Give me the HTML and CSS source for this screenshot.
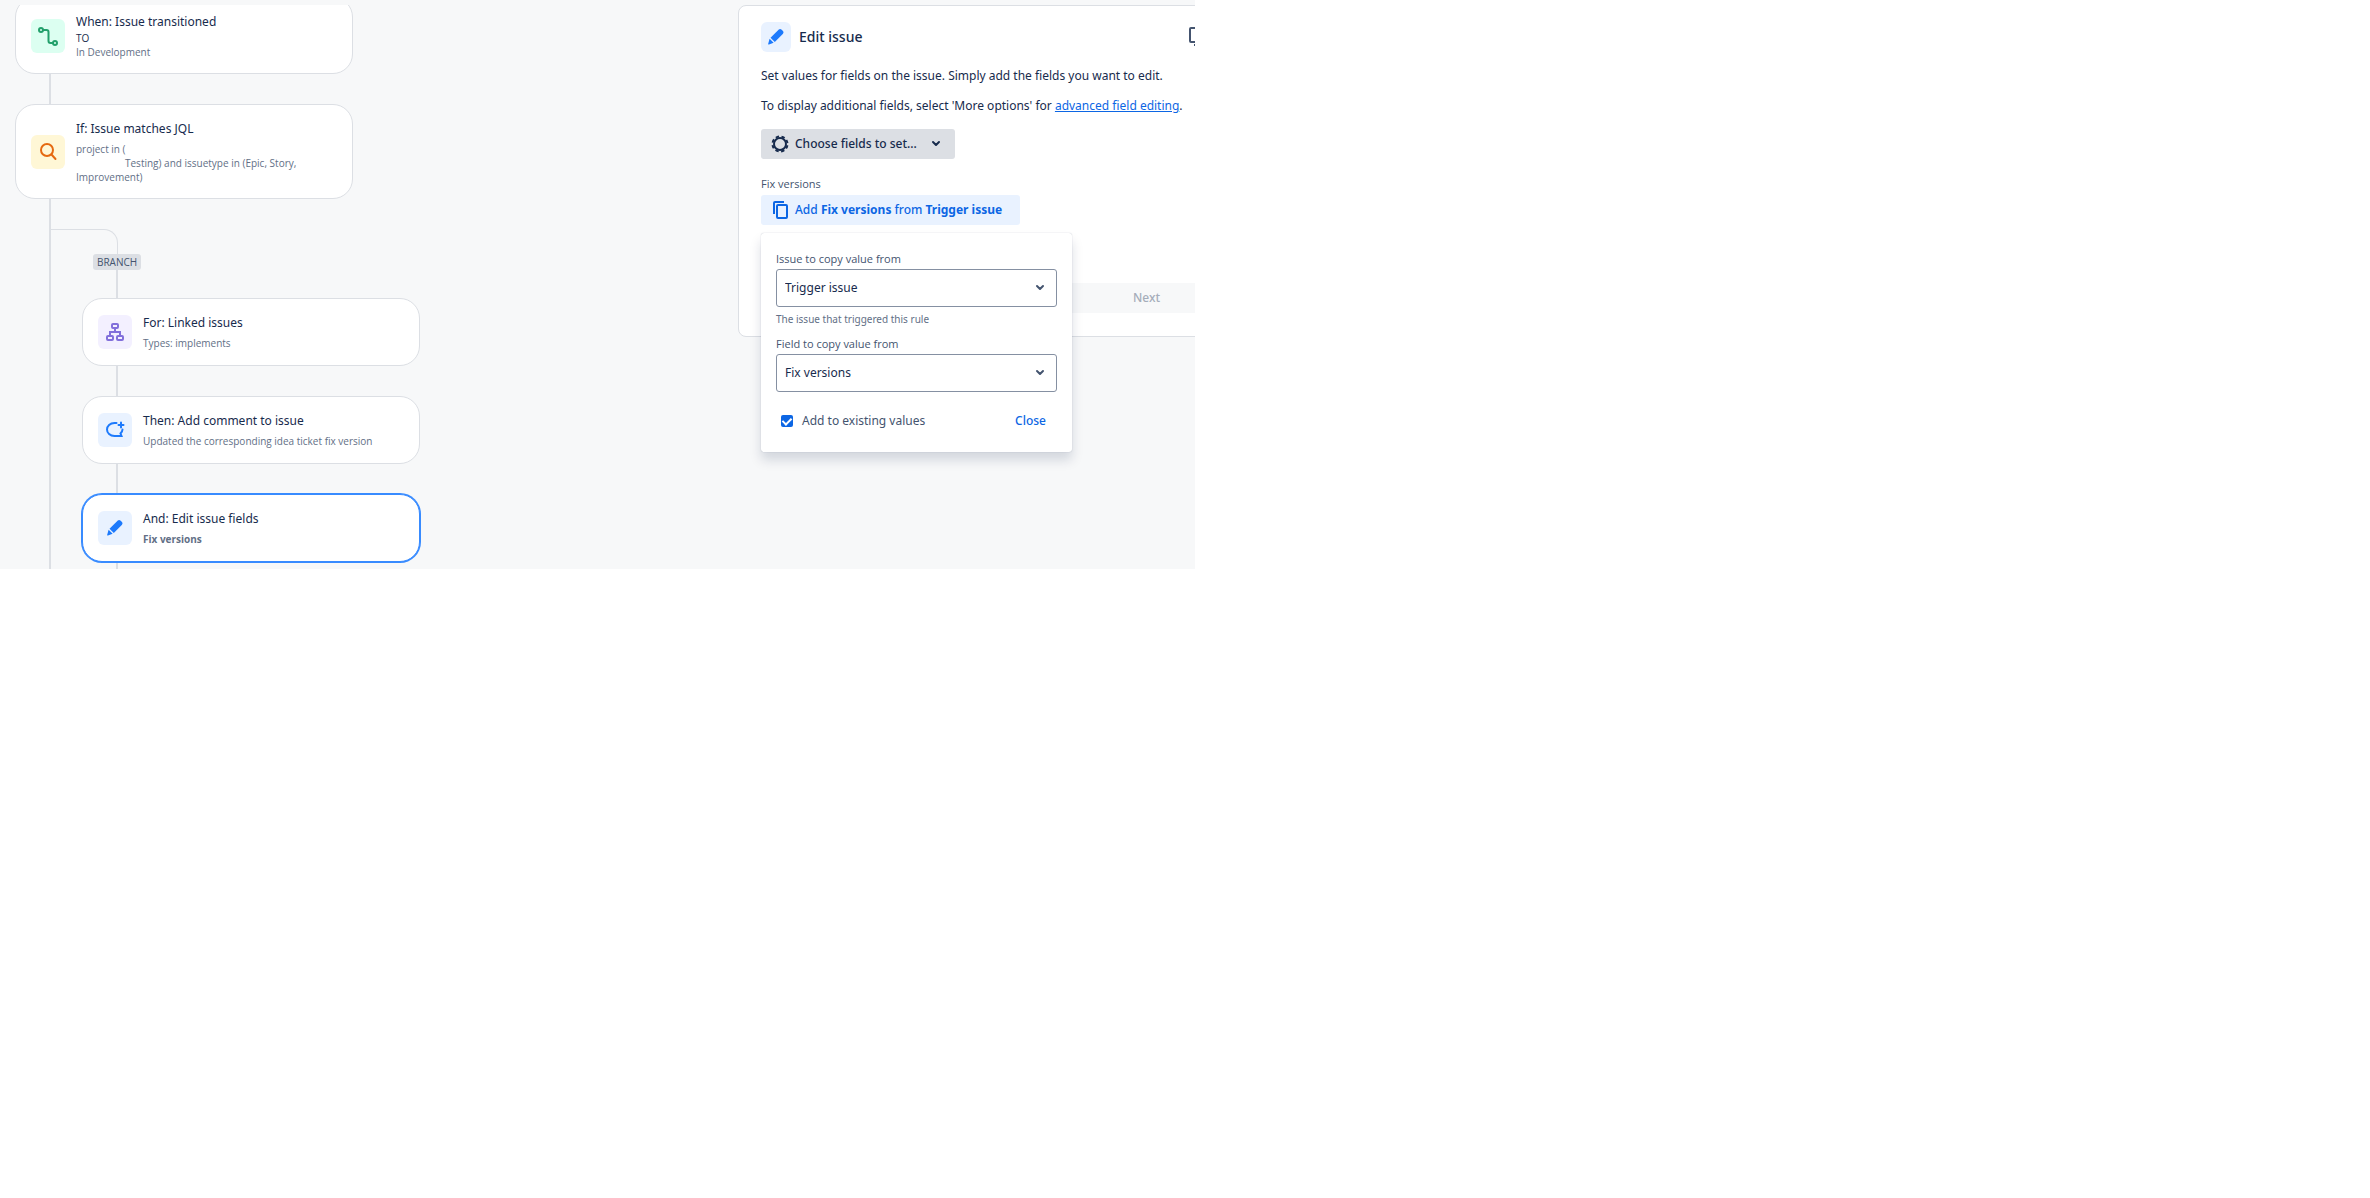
FILE: index.html
```html
<!DOCTYPE html>
<html lang="en">
<head>
    <meta charset="UTF-8">
    <meta name="viewport" content="width=device-width, initial-scale=1.0">
    <title>Automation rule</title>
    <link rel="stylesheet" href="styles.css">
</head>
<body>
    <main class="rule-builder">
        <section class="chain">
            <div class="trunk">
                <article class="card card-first">
                    <span class="card-icon green">
                        <svg viewBox="0 0 20 20" width="20" height="20" fill="none" stroke="currentColor" stroke-width="2" stroke-linecap="round"><circle cx="3" cy="4" r="2"/><circle cx="17" cy="17" r="2"/><path d="M5 4h3.500a2 2 0 0 1 2 2v9a2 2 0 0 0 2 2H15"/></svg>
                    </span>
                    <div class="card-text">
                        <h2>When: Issue transitioned</h2>
                        <p class="strong">TO</p>
                        <p>In Development</p>
                    </div>
                </article>

                <article class="card card-condition">
                    <span class="card-icon yellow">
                        <svg viewBox="0 0 20 20" width="20" height="20" fill="none" stroke="currentColor" stroke-width="2" stroke-linecap="round"><circle cx="9" cy="8" r="6"/><path d="M13.500 12.500L17.500 17"/></svg>
                    </span>
                    <div class="card-text spaced">
                        <h2>If: Issue matches JQL</h2>
                        <p>project in (<br><span class="blank"></span>Testing) and issuetype in (Epic, Story, Improvement)</p>
                    </div>
                </article>
            </div>

            <div class="branch">
                <div class="branch-start">
                    <span class="branch-badge">BRANCH</span>
                </div>
                <div class="branch-cards">
                    <article class="card">
                        <span class="card-icon purple">
                            <svg viewBox="0 0 20 20" width="20" height="20" fill="none" stroke="currentColor" stroke-width="2"><rect x="7" y="2" width="6" height="4" rx="1"/><rect x="2" y="14" width="6" height="4" rx="1"/><rect x="12" y="14" width="6" height="4" rx="1"/><path d="M10 6v4M5 14v-4h10v4"/></svg>
                        </span>
                        <div class="card-text spaced">
                            <h2>For: Linked issues</h2>
                            <p>Types: implements</p>
                        </div>
                    </article>

                    <article class="card">
                        <span class="card-icon blue">
                            <svg viewBox="0 0 20 20" width="20" height="20" fill="none" stroke="currentColor" stroke-width="2" stroke-linecap="round"><path d="M11.500 3H9.500C5 3 2 6 2 9.500S5 16 9.500 16H16.500L15.500 13.500C16.800 12 17.500 11 17.500 9.500"/><path d="M16 2.500v5M13.500 5h5"/></svg>
                        </span>
                        <div class="card-text spaced">
                            <h2>Then: Add comment to issue</h2>
                            <p>Updated the corresponding idea ticket fix version</p>
                        </div>
                    </article>

                    <article class="card selected">
                        <span class="card-icon blue">
                            <svg viewBox="0 0 20 20" width="20" height="20" fill="currentColor"><path d="M12.800 2.500a2 2 0 0 1 2.600 0l1.600 1.600a2 2 0 0 1 0 2.600L8.800 15 4.500 10.800zM3.600 11.800l4 4L3 17.500a.6.6 0 0 1-.8-.8z"/></svg>
                        </span>
                        <div class="card-text spaced">
                            <h2>And: Edit issue fields</h2>
                            <p><b>Fix versions</b></p>
                        </div>
                    </article>
                </div>
            </div>
        </section>

        <section class="panel">
            <header class="panel-header">
                <span class="card-icon small blue">
                    <svg viewBox="0 0 20 20" width="20" height="20" fill="currentColor"><path d="M12.800 2.500a2 2 0 0 1 2.600 0l1.600 1.600a2 2 0 0 1 0 2.600L8.800 15 4.500 10.800zM3.600 11.800l4 4L3 17.500a.6.6 0 0 1-.8-.8z"/></svg>
                </span>
                <h1>Edit issue</h1>
                <button type="button" class="icon-button" aria-label="Feedback">
                    <svg viewBox="0 0 20 20" width="20" height="20" fill="none" stroke="currentColor" stroke-width="2"><rect x="1" y="1" width="18" height="14" rx="1"/><path d="M5 18h10"/></svg>
                </button>
            </header>
            <p>Set values for fields on the issue. Simply add the fields you want to edit.</p>
            <p>To display additional fields, select 'More options' for <a href="#">advanced field editing</a>.</p>

            <button type="button" class="fields-button">
                <svg viewBox="0 0 18 18" width="18" height="18" fill="none" stroke="currentColor"><circle cx="9" cy="9" r="6" stroke-width="2"/><circle cx="9" cy="9" r="7.500" stroke-width="2" stroke-dasharray="3.400 2.490" stroke-dashoffset="4.600"/></svg>
                <span>Choose fields to set...</span>
                <svg class="chevron" viewBox="0 0 10 8" width="10" height="8" fill="none" stroke="currentColor" stroke-width="2" stroke-linecap="round" stroke-linejoin="round"><path d="M2 2l3 3 3-3"/></svg>
            </button>

            <div class="field">
                <span class="field-name">Fix versions</span>
                <button type="button" class="copy-button">
                    <svg viewBox="0 0 18 18" width="18" height="18" fill="none" stroke="currentColor" stroke-width="2"><rect x="6" y="4" width="10" height="13" rx="1"/><path d="M3 13V2a1 1 0 0 1 1-1h9"/></svg>
                    <span>Add <b>Fix versions</b> from <b>Trigger issue</b></span>
                </button>

                <form class="popover">
                    <label for="copyIssue">Issue to copy value from</label>
                    <div class="select-box">
                        <select id="copyIssue"><option>Trigger issue</option></select>
                        <svg class="chevron" viewBox="0 0 10 8" width="10" height="8" fill="none" stroke="currentColor" stroke-width="2" stroke-linecap="round" stroke-linejoin="round"><path d="M2 2l3 3 3-3"/></svg>
                    </div>
                    <p class="hint">The issue that triggered this rule</p>
                    <label for="copyField">Field to copy value from</label>
                    <div class="select-box">
                        <select id="copyField"><option>Fix versions</option></select>
                        <svg class="chevron" viewBox="0 0 10 8" width="10" height="8" fill="none" stroke="currentColor" stroke-width="2" stroke-linecap="round" stroke-linejoin="round"><path d="M2 2l3 3 3-3"/></svg>
                    </div>
                    <div class="popover-footer">
                        <label class="check"><input type="checkbox" checked>Add to existing values</label>
                        <button type="button" class="close-button">Close</button>
                    </div>
                </form>
            </div>

            <button type="button" class="next-button" disabled>Next</button>
        </section>
    </main>
</body>
</html>
```
FILE: styles.css
```css
* {
    box-sizing: border-box;
}
body {
    margin: 0;
    background-color: #fff;
    color: #172b4d;
    font-family: "Noto Sans", "Open Sans", sans-serif;
    font-size: 12px;
    line-height: 20px;
}
h1, h2, p {
    margin: 0;
    font-weight: 400;
}
button, select, input {
    font: inherit;
    color: inherit;
    margin: 0;
}
button {
    border: none;
    background: none;
    cursor: pointer;
}
svg {
    display: block;
    flex: none;
}

/* Left half of the window, the panel runs past its right edge */
.rule-builder {
    display: flex;
    align-items: flex-start;
    width: calc(50% + 10px);
    padding-top: 5px;
    background-color: #f7f8f9;
    overflow: hidden;
}

/* Rule chain */
.chain {
    flex: 1;
    padding: 0 15px;
    overflow: hidden;
    background: linear-gradient(#dcdfe4, #dcdfe4) 49px 0 / 2px 100% no-repeat;
}
.trunk {
    display: grid;
    gap: 30px;
}
.card {
    display: flex;
    align-items: center;
    gap: 11px;
    width: 338px;
    min-height: 68px;
    padding: 10px 15px;
    background-color: #fff;
    border: 1px solid #dcdfe4;
    border-radius: 20px;
}
.card-first {
    margin-top: -8px;
    min-height: 77px;
}
.card-condition {
    min-height: 95px;
}
.card.selected {
    border-color: #388bff;
    box-shadow: 0 0 0 1px #388bff;
}
.card-icon {
    display: grid;
    place-items: center;
    flex: none;
    width: 34px;
    height: 34px;
    border-radius: 6px;
}
.card-icon.small {
    width: 30px;
    height: 30px;
}
.green { background-color: #dcfff1; color: #22a06b; }
.yellow { background-color: #fff7d6; color: #e56910; }
.purple { background-color: #f3f0ff; color: #8270db; }
.blue { background-color: #e9f2ff; color: #1d7afc; }
.card-text h2 {
    font-size: 12px;
    line-height: 18px;
}
.card-text p {
    color: #626f86;
    font-family: "Open Sans", sans-serif;
    font-size: 10px;
    line-height: 14px;
}
.card-text .strong {
    color: #172b4d;
}
.card-text.spaced h2 {
    margin-bottom: 4px;
}
.blank {
    display: inline-block;
    width: 49px;
}

/* Branch */
.branch {
    padding-bottom: 7px;
    background: linear-gradient(#dcdfe4, #dcdfe4) 101px 70px / 2px 100% no-repeat;
}
.branch-start {
    width: 69px;
    height: 99px;
    margin-left: 34px;
    padding-top: 30px;
}
.branch-start::before {
    content: "";
    display: block;
    height: 24px;
    border-top: 1px solid #dcdfe4;
    border-right: 1px solid #dcdfe4;
    border-top-right-radius: 14px;
}
.branch-badge {
    display: block;
    width: 48px;
    margin-left: 44px;
    border-radius: 3px;
    background-color: #dcdfe4;
    color: #44546f;
    font-family: "Open Sans", sans-serif;
    font-size: 10px;
    line-height: 16px;
    text-align: center;
}
.branch-cards {
    display: grid;
    gap: 30px;
    margin-left: 67px;
}

/* Edit panel */
.panel {
    flex: none;
    width: 560px;
    margin-right: -103px;
    padding: 16px 22px 23px;
    background-color: #fff;
    border: 1px solid #dcdfe4;
    border-radius: 8px;
}
.panel-header {
    display: flex;
    align-items: center;
    gap: 8px;
    margin-bottom: 14px;
}
.panel h1 {
    flex: 1;
    font-size: 14px;
    font-weight: 500;
}
.icon-button {
    width: 86px;
    padding: 0;
    color: #44546f;
}
.panel > p {
    margin-bottom: 10px;
}
a {
    color: #0c66e4;
}
.fields-button,
.copy-button {
    display: flex;
    align-items: center;
    gap: 6px;
    height: 30px;
    padding: 0 18px 0 10px;
    border-radius: 3px;
    background-color: #dcdfe4;
    font-weight: 500;
}
.fields-button {
    margin-top: 13px;
    padding-right: 14px;
}
.fields-button .chevron {
    margin-left: 8px;
}
.field {
    position: relative;
    margin-top: 15px;
}
.field-name {
    display: block;
    margin-bottom: 2px;
    color: #44546f;
    font-family: "Open Sans", sans-serif;
    font-size: 11px;
    line-height: 19px;
}
.copy-button {
    background-color: #e9f2ff;
    color: #0c66e4;
}

/* Opens over the panel */
.popover {
    position: absolute;
    top: 59px;
    left: 0;
    width: 311px;
    padding: 15px;
    background-color: #fff;
    border-radius: 3px;
    box-shadow: 0 8px 12px rgba(9, 30, 66, 0.15), 0 0 1px rgba(9, 30, 66, 0.31);
}
.popover > label {
    display: block;
    color: #44546f;
    font-family: "Open Sans", sans-serif;
    font-size: 11px;
    line-height: 21px;
}
.select-box {
    display: grid;
    align-items: center;
}
.select-box select {
    grid-area: 1 / 1;
    width: 100%;
    height: 38px;
    padding: 0 8px;
    appearance: none;
    background-color: #fff;
    border: 1px solid #8590a2;
    border-radius: 3px;
}
.select-box .chevron {
    grid-area: 1 / 1;
    justify-self: end;
    margin-right: 12px;
    color: #44546f;
    pointer-events: none;
}
.hint {
    margin-bottom: 2px;
    color: #626f86;
    font-size: 10px;
    line-height: 24px;
}
.popover-footer {
    display: flex;
    align-items: center;
    justify-content: space-between;
    padding: 19px 11px 6px 5px;
}
.check {
    display: flex;
    align-items: center;
    gap: 9px;
    color: #44546f;
}
.check input {
    display: grid;
    place-items: center;
    width: 12px;
    height: 12px;
    appearance: none;
    border-radius: 2px;
    background-color: #0c66e4;
}
.check input::after {
    content: "";
    width: 4px;
    height: 7px;
    margin-bottom: 2px;
    border: solid #fff;
    border-width: 0 2px 2px 0;
    transform: rotate(45deg);
}
.close-button {
    padding: 0;
    color: #0c66e4;
    font-weight: 500;
}
.next-button {
    display: block;
    width: 50%;
    height: 30px;
    margin: 58px 0 0 auto;
    background-color: #f7f8f9;
    color: #a5adba;
    border-radius: 3px;
    font-weight: 500;
}
```
